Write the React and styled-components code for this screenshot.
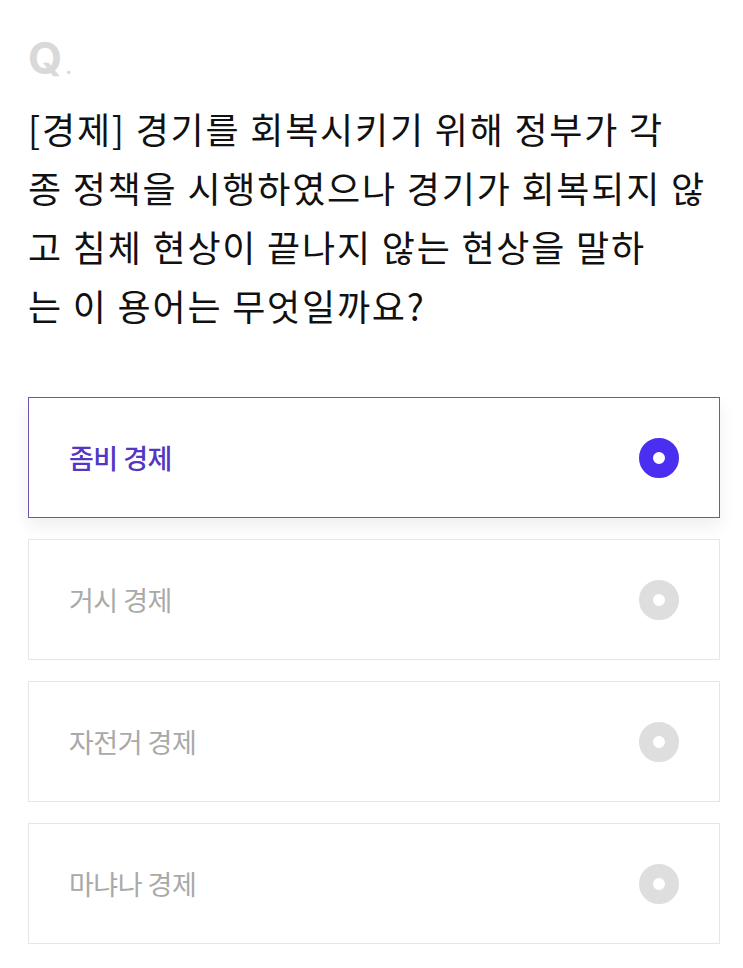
import React from 'react';
import styled, { createGlobalStyle } from 'styled-components';

const Global = createGlobalStyle`
  html, body { margin: 0; padding: 0; background: #fff; }
  body { font-family: "Noto Sans CJK KR", "Noto Sans", sans-serif; }
`;

const Page = styled.div`
  width: 743px;
  padding: 30px 23px 0 28px;
  box-sizing: border-box;
`;

const Mark = styled.div`
  font-family: "Inter", "Noto Sans", sans-serif;
  font-weight: 700;
  font-size: 44px;
  line-height: 56px;
  color: #d9d9d9;
  letter-spacing: -1px;
  span { font-size: 20px; margin-left: 4px; }
`;

const Question = styled.h2`
  margin: 4px 0 0;
  font-weight: 400;
  font-size: 36px;
  line-height: 59px;
  color: #111;
  letter-spacing: 1.8px;
  div { white-space: nowrap; }
`;

const Options = styled.div`
  margin-top: 62px;
  display: flex;
  flex-direction: column;
  gap: 21px;
`;

const Option = styled.div`
  height: 121px;
  box-sizing: border-box;
  border: ${p => (p.$active ? '1.5px solid #6d55b0' : '1px solid #e6e6e6')};
  box-shadow: ${p => (p.$active ? '0 8px 16px rgba(0,0,0,0.07)' : 'none')};
  display: flex;
  align-items: center;
  justify-content: space-between;
  padding: 0 40px 0 40px;
`;

const Label = styled.span`
  font-size: 27px;
  font-weight: ${p => (p.$active ? 500 : 400)};
  color: ${p => (p.$active ? '#5236c4' : '#a9a9a9')};
  letter-spacing: -0.5px;
`;

const Radio = styled.span`
  width: 40px;
  height: 40px;
  border-radius: 50%;
  box-sizing: border-box;
  border: 14px solid ${p => (p.$active ? '#4a2ff0' : '#dedede')};
  background: #fff;
`;

const items = ['좀비 경제', '거시 경제', '자전거 경제', '마냐나 경제'];

export default function App() {
  return (
    <Page>
      <Global />
      <Mark>Q<span>.</span></Mark>
      <Question>
        <div>[경제] 경기를 회복시키기 위해 정부가 각</div>
        <div>종 정책을 시행하였으나 경기가 회복되지 않</div>
        <div>고 침체 현상이 끝나지 않는 현상을 말하</div>
        <div>는 이 용어는 무엇일까요?</div>
      </Question>
      <Options>
        {items.map((t, i) => (
          <Option key={t} $active={i === 0}>
            <Label $active={i === 0}>{t}</Label>
            <Radio $active={i === 0} />
          </Option>
        ))}
      </Options>
    </Page>
  );
}
